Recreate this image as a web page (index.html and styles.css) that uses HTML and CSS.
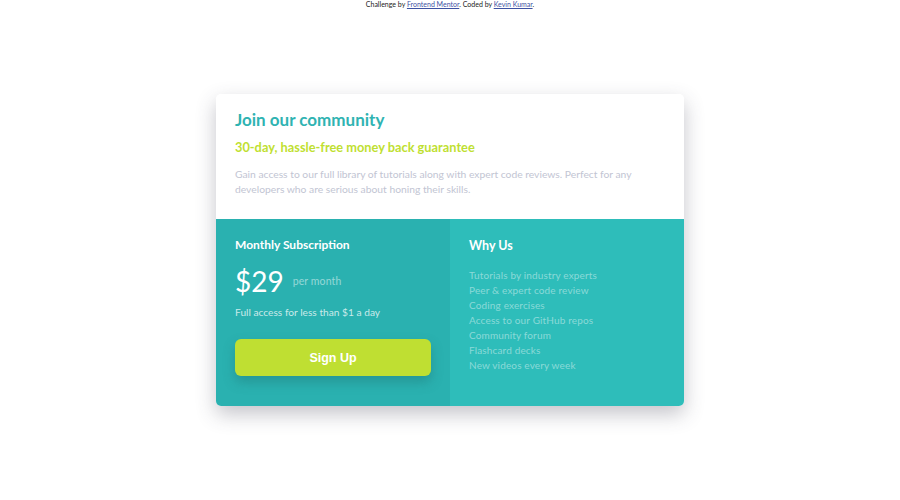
FILE: index.html
```html
<!DOCTYPE html>
<html lang="en">
<head>
<meta charset="utf-8">
<title>Single price grid</title>
<link rel="stylesheet" href="styles.css">
</head>
<body>
<p class="attribution">Challenge by <a href="#">Frontend Mentor</a>. Coded by <a href="#">Kevin Kumar</a>.</p>
<main class="card">
  <section class="intro">
    <h1 class="title">Join our community</h1>
    <h2 class="subtitle">30-day, hassle-free money back guarantee</h2>
    <p class="desc">Gain access to our full library of tutorials along with expert code reviews. Perfect for any developers who are serious about honing their skills.</p>
  </section>
  <div class="bottom">
    <section class="sub">
      <h3 class="heading">Monthly Subscription</h3>
      <div class="price"><span class="amount">$29</span><span class="per">per month</span></div>
      <p class="access">Full access for less than $1 a day</p>
      <button class="btn">Sign Up</button>
    </section>
    <section class="why">
      <h3 class="heading why-heading">Why Us</h3>
      <ul class="list">
        <li>Tutorials by industry experts</li>
        <li>Peer &amp; expert code review</li>
        <li>Coding exercises</li>
        <li>Access to our GitHub repos</li>
        <li>Community forum</li>
        <li>Flashcard decks</li>
        <li>New videos every week</li>
      </ul>
    </section>
  </div>
</main>
</body>
</html>
```
FILE: styles.css
```css
* { box-sizing: border-box; }
html, body { margin: 0; padding: 0; }
body {
  height: 100vh;
  display: flex;
  align-items: center;
  justify-content: center;
  font-family: "Lato", "Liberation Sans", sans-serif;
  background: #fff;
}
.attribution {
  position: absolute;
  top: 0;
  left: 0;
  right: 0;
  margin: 0;
  text-align: center;
  font-size: 7px;
  line-height: 8px;
  color: #222;
}
.attribution a { color: #3e52a3; }
.card {
  width: 468px;
  border-radius: 5px;
  overflow: hidden;
  box-shadow: 0 8px 20px rgba(60, 60, 80, 0.3);
}
.intro {
  background: #fff;
  padding: 16px 19px 22px;
}
.title {
  margin: 0;
  font-size: 17px;
  line-height: 20px;
  font-weight: 700;
  color: #2fb3b2;
}
.subtitle {
  margin: 9px 0 0;
  font-size: 12.8px;
  line-height: 16px;
  font-weight: 700;
  color: #bfdf32;
}
.desc {
  margin: 12px 0 0;
  font-size: 10.3px;
  line-height: 15px;
  color: #c2c5d3;
}
.bottom {
  display: grid;
  grid-template-columns: 1fr 1fr;
}
.sub {
  background: #2ab1b0;
  padding: 19px 19px 30px;
}
.why {
  background: #2ebdba;
  padding: 20px 19px;
}
.heading {
  margin: 0;
  font-size: 12px;
  line-height: 14px;
  font-weight: 700;
  color: #fff;
}
.why-heading { font-size: 12.5px; }
.price {
  display: flex;
  align-items: center;
  margin-top: 12px;
}
.amount {
  font-size: 28px;
  line-height: 34px;
  color: #fff;
}
.per {
  margin-left: 9px;
  margin-top: -1px;
  font-size: 10.5px;
  letter-spacing: 0.1px;
  color: rgba(255, 255, 255, 0.5);
}
.access {
  margin: 7px 0 0;
  font-size: 10.2px;
  line-height: 14px;
  color: rgba(255, 255, 255, 0.75);
}
.btn {
  display: block;
  width: 100%;
  height: 37px;
  margin-top: 20px;
  border: 0;
  border-radius: 6px;
  background: #bfdf32;
  color: #fff;
  font-family: "Liberation Sans", Arial, sans-serif;
  font-size: 12.5px;
  font-weight: 700;
  box-shadow: 0 6px 12px rgba(30, 100, 100, 0.35);
}
.list {
  list-style: none;
  margin: 15px 0 0;
  padding: 0;
  font-size: 10px;
  letter-spacing: 0.15px;
  line-height: 15px;
  color: rgba(255, 255, 255, 0.45);
}
```
